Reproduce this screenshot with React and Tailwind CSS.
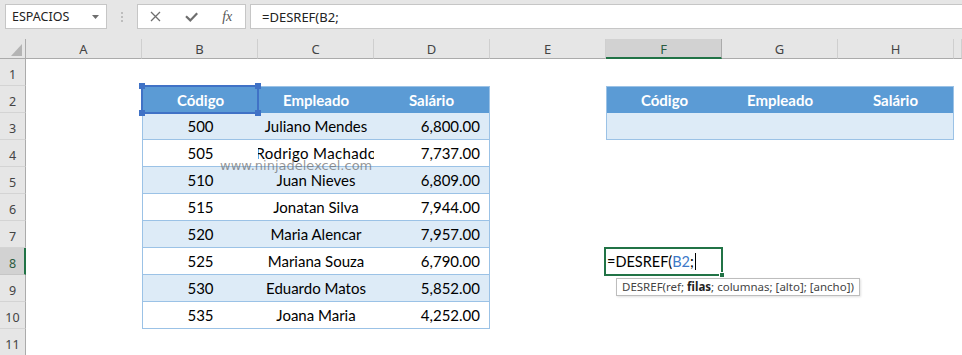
import React from 'react';

const COLS = ['A', 'B', 'C', 'D', 'E', 'F', 'G', 'H', 'I'];
const DATA = {
  3: ['500', 'Juliano Mendes', '6,800.00'],
  4: ['505', 'Rodrigo Machado', '7,737.00'],
  5: ['510', 'Juan Nieves', '6,809.00'],
  6: ['515', 'Jonatan Silva', '7,944.00'],
  7: ['520', 'Maria Alencar', '7,957.00'],
  8: ['525', 'Mariana Souza', '6,790.00'],
  9: ['530', 'Eduardo Matos', '5,852.00'],
  10: ['535', 'Joana Maria', '4,252.00'],
};
const HEAD = ['Código', 'Empleado', 'Salário'];
const ROWS = [1, 2, 3, 4, 5, 6, 7, 8, 9, 10, 11];

function TopBar() {
  return (
    <div className="h-[39px] bg-[#e6e6e6] flex items-start pt-[4px] pl-[5px] font-['Noto_Sans',sans-serif]">
      <div className="w-[102px] h-[25px] shrink-0 bg-white border border-[#c6c6c6] flex items-center justify-between pl-[6px] pr-[7px]">
        <span className="text-[12.5px] leading-[16px] text-[#222]">ESPACIOS</span>
        <svg width="7" height="4" viewBox="0 0 7 4">
          <polygon points="0,0 7,0 3.5,4" fill="#6e6e6e" />
        </svg>
      </div>
      <div className="w-[30px] h-[25px] shrink-0 flex flex-col items-center justify-center gap-[2px]">
        <div className="w-[2px] h-[2px] bg-[#bdbdbd]" />
        <div className="w-[2px] h-[2px] bg-[#bdbdbd]" />
        <div className="w-[2px] h-[2px] bg-[#bdbdbd]" />
      </div>
      <div className="w-[109px] h-[25px] shrink-0 bg-white border border-[#c6c6c6] flex items-center">
        <div className="w-[36px] flex items-center justify-center">
          <svg width="11" height="11" viewBox="0 0 11 11">
            <path d="M1 1L10 10M10 1L1 10" stroke="#6e6e6e" strokeWidth="1.3" />
          </svg>
        </div>
        <div className="w-[36px] flex items-center justify-center">
          <svg width="13" height="10" viewBox="0 0 13 10">
            <path d="M1 4.2L5.3 8.4L12.2 1.2" stroke="#6e6e6e" strokeWidth="2.2" fill="none" />
          </svg>
        </div>
        <div className="w-[36px] flex items-center justify-center">
          <span className="font-['Liberation_Serif',serif] italic text-[14px] leading-[16px] text-[#555]">fx</span>
        </div>
      </div>
      <div className="ml-[4px] flex-1 h-[25px] bg-white border border-[#c6c6c6] border-r-0 flex items-center pl-[11px]">
        <span className="text-[13px] leading-[16px] text-[#222]">=DESREF(B2;</span>
      </div>
    </div>
  );
}

function HeaderRow() {
  return (
    <div className="flex h-[20px] font-['Noto_Sans',sans-serif]">
      <div className="w-[26px] shrink-0 bg-[#e6e6e6] border-r border-r-[#ababab] border-b border-b-[#ababab] flex items-end justify-end pr-[3px] pb-[2px]">
        <svg width="11" height="12" viewBox="0 0 11 12">
          <polygon points="11,0 11,12 0,12" fill="#b4b4b4" />
        </svg>
      </div>
      {COLS.map((c) =>
        c === 'F' ? (
          <div
            key={c}
            className="w-[116px] shrink-0 bg-[#d2d2d2] border-r border-r-[#ababab] border-b-2 border-b-[#217346] flex items-center justify-center pt-[1px] text-[13px] leading-[16px] text-[#2a5b40]"
          >
            {c}
          </div>
        ) : (
          <div
            key={c}
            className={
              (c === 'I' ? 'w-[8px] ' : 'w-[116px] ') +
              'shrink-0 bg-[#e6e6e6] border-r border-r-[#cfcfcf] border-b border-b-[#ababab] flex items-center justify-center pt-[1px] text-[13px] leading-[16px] text-[#444]'
            }
          >
            {c === 'I' ? '' : c}
          </div>
        )
      )}
    </div>
  );
}

function RowHeader({ r }) {
  if (r === 8) {
    return (
      <div className="w-[26px] shrink-0 bg-[#d2d2d2] border-r-2 border-r-[#217346] border-b border-b-[#c6c6c6] flex items-end justify-center pb-[2px] pl-[1px] font-['Noto_Sans',sans-serif] text-[12.5px] leading-[16px] text-[#2a5b40]">
        {r}
      </div>
    );
  }
  return (
    <div className="w-[26px] shrink-0 bg-[#e6e6e6] border-r border-r-[#ababab] border-b border-b-[#d4d4d4] flex items-end justify-center pb-[2px] font-['Noto_Sans',sans-serif] text-[12.5px] leading-[16px] text-[#444]">
      {r}
    </div>
  );
}

function TableCell({ r, pos, text }) {
  // pos: 0 left, 1 middle, 2 right
  const edge =
    pos === 0 ? ' border-l border-l-[#9bc2e6]' : pos === 2 ? ' border-r border-r-[#9bc2e6]' : '';
  if (r === 2) {
    return (
      <div
        className={
          'w-[116px] h-[27px] shrink-0 bg-[#5b9bd5] border-t border-t-[#9bc2e6] flex items-center justify-center whitespace-nowrap text-white font-bold text-[15px] font-[Lato,sans-serif]' +
          edge
        }
      >
        {text}
      </div>
    );
  }
  const bg = r % 2 === 1 ? ' bg-[#ddebf7]' : ' bg-white';
  const align = pos === 2 ? ' justify-end pr-[9px]' : ' justify-center';
  const wide = text === 'Rodrigo Machado' ? ' tracking-[0.35px]' : '';
  return (
    <div
      className={
        'w-[116px] h-[27px] shrink-0 border-b border-b-[#9bc2e6] flex items-center overflow-hidden whitespace-nowrap text-black text-[15px] font-[Lato,sans-serif]' +
        bg +
        align +
        edge
      }
    >
      <span className={'shrink-0' + wide}>{text}</span>
    </div>
  );
}

function Selection() {
  return (
    <div className="absolute -left-[1px] -top-[1px] -right-[1px] -bottom-[1px] border-2 border-[#4072c6]">
      <div className="absolute -left-[4px] -top-[4px] w-[6px] h-[6px] bg-[#4072c6]" />
      <div className="absolute -right-[4px] -top-[4px] w-[6px] h-[6px] bg-[#4072c6]" />
      <div className="absolute -left-[4px] -bottom-[4px] w-[6px] h-[6px] bg-[#4072c6]" />
      <div className="absolute -right-[4px] -bottom-[4px] w-[6px] h-[6px] bg-[#4072c6]" />
    </div>
  );
}

function EditCell() {
  return (
    <div className="w-[116px] h-[27px] shrink-0 relative">
      <div className="absolute -left-[2px] -top-[1px] w-[119px] h-[29px] border-2 border-[#217346] bg-white flex items-center pl-[1px] whitespace-nowrap text-black text-[14.5px] font-[Lato,sans-serif]">
        <span>=DESREF(</span>
        <span className="text-[#3e79c8]">B2</span>
        <span>;</span>
        <span className="w-px h-[17px] bg-black ml-[1px]" />
        <div className="absolute -right-[4px] -bottom-[4px] w-[6px] h-[6px] bg-[#217346] border border-white" />
      </div>
      <div className="absolute top-[30px] left-[10px] h-[18px] bg-white border border-[#bdbdbd] shadow-[1px_1px_2px_rgba(0,0,0,0.12)] flex items-center px-[5px] whitespace-nowrap font-['Noto_Sans',sans-serif] text-[11.5px] leading-[14px] text-[#444]">
        <span>
          DESREF(ref; <b className="font-bold text-[#222]">filas</b>; columnas; [alto]; [ancho])
        </span>
      </div>
    </div>
  );
}

function Row({ r }) {
  const cells = [];
  COLS.forEach((c, i) => {
    const key = c;
    if (i >= 1 && i <= 3 && r >= 2 && r <= 10) {
      const text = r === 2 ? HEAD[i - 1] : DATA[r][i - 1];
      if (r === 2 && i === 1) {
        cells.push(
          <div key={key} className="relative shrink-0">
            <TableCell r={r} pos={0} text={text} />
            <Selection />
          </div>
        );
      } else {
        cells.push(<TableCell key={key} r={r} pos={i - 1} text={text} />);
      }
    } else if (i >= 5 && i <= 7 && r >= 2 && r <= 3) {
      cells.push(<TableCell key={key} r={r} pos={i - 5} text={r === 2 ? HEAD[i - 5] : ''} />);
    } else if (r === 8 && c === 'F') {
      cells.push(<EditCell key={key} />);
    } else {
      cells.push(
        <div key={key} className={(c === 'I' ? 'w-[8px]' : 'w-[116px]') + ' h-[27px] shrink-0 bg-white'} />
      );
    }
  });
  return (
    <div className="flex h-[27px]">
      <RowHeader r={r} />
      {cells}
    </div>
  );
}

export default function App() {
  return (
    <div className="w-[962px] h-[355px] overflow-hidden bg-white relative">
      <TopBar />
      <HeaderRow />
      {ROWS.map((r) => (
        <Row key={r} r={r} />
      ))}
      <div className="absolute left-[220px] top-[158px] font-['DejaVu_Sans',sans-serif] text-[13px] leading-[16px] text-[#6a6a6a]/70 whitespace-nowrap pointer-events-none">
        www.ninjadelexcel.com
      </div>
    </div>
  );
}
